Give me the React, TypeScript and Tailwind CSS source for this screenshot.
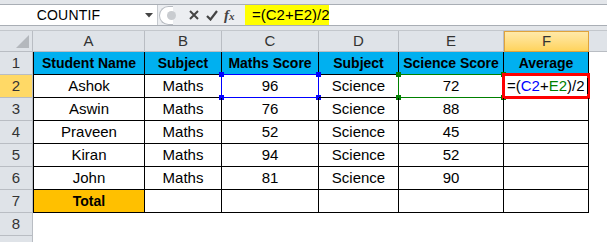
import React from "react";

const cols = ["A", "B", "C", "D", "E", "F"];
const widths = ["w-[112px]", "w-[77px]", "w-[97px]", "w-[80px]", "w-[105px]", "w-[85px]"];

const header = ["Student Name", "Subject", "Maths Score", "Subject", "Science Score", "Average"];

const rows = [
  ["Ashok", "Maths", "96", "Science", "72"],
  ["Aswin", "Maths", "76", "Science", "88"],
  ["Praveen", "Maths", "52", "Science", "45"],
  ["Kiran", "Maths", "94", "Science", "52"],
  ["John", "Maths", "81", "Science", "90"],
];

function Corners({ color }: { color: string }) {
  return (
    <>
      <div className={`absolute -left-[3px] -top-[3px] h-[5px] w-[5px] ${color}`} />
      <div className={`absolute -right-[3px] -top-[3px] h-[5px] w-[5px] ${color}`} />
      <div className={`absolute -left-[3px] -bottom-[3px] h-[5px] w-[5px] ${color}`} />
      <div className={`absolute -right-[3px] -bottom-[3px] h-[5px] w-[5px] ${color}`} />
    </>
  );
}

function RowHead({ n, active }: { n?: number; active?: boolean }) {
  return (
    <div
      className={`flex h-[23px] w-[33px] shrink-0 items-center justify-center border-b border-r border-[#b9bdc3] text-[15px] text-[#333] ${
        active ? "bg-[#ffd966]" : "bg-[#dfe3e8]"
      }`}
    >
      {n}
    </div>
  );
}

export default function App() {
  return (
    <div className="h-[242px] w-[607px] overflow-hidden whitespace-nowrap bg-white font-['Liberation_Sans',Arial,sans-serif] text-black">
      {/* formula bar */}
      <div className="bg-[#e3e6ea] pt-[4px] pb-[4px]">
        <div className="flex h-[22px] border-y border-[#a9aeb5] bg-white">
          <div className="relative flex w-[158px] items-center justify-center border-r border-[#c6cacf] text-[14px] tracking-[0.2px]">
            <span className="pr-[20px]">COUNTIF</span>
            <svg className="absolute right-[4px] top-[8px]" width="8" height="5" viewBox="0 0 8 5">
              <path d="M0 0 H8 L4 4.5 Z" fill="#444" />
            </svg>
          </div>
          <div className="flex w-[87px] items-center bg-[#eceef1]">
            <div className="ml-[1px] h-[19px] w-[14px] rounded-l-full border-y border-l border-[#b8bcc2] bg-white" />
            <div className="-ml-[6px] h-[9px] w-[9px] rounded-full bg-[#c9ccd0]" />
            <svg className="ml-[13px]" width="10" height="10" viewBox="0 0 10 10">
              <path d="M1 1 L9 9 M9 1 L1 9" stroke="#444" strokeWidth="2" />
            </svg>
            <svg className="ml-[7px]" width="12" height="11" viewBox="0 0 12 11">
              <path d="M1 6 L4.5 9.5 L11 1" stroke="#444" strokeWidth="2.2" fill="none" />
            </svg>
            <span className="ml-[6px] font-['Liberation_Serif',serif] text-[15px] italic font-bold text-[#444] leading-none">
              f<span className="text-[11px]">x</span>
            </span>
          </div>
          <div className="flex w-[84px] items-center bg-[#ffff00] pl-[7px] text-[15px]">=(C2+E2)/2</div>
          <div className="flex-1" />
        </div>
      </div>

      {/* column headers */}
      <div className="flex h-[22px] bg-[#dfe3e8] border-t border-[#c3c7cc]">
        <div className="relative w-[33px] shrink-0 border-r border-b border-[#b9bdc3]">
          <svg className="absolute bottom-[3px] right-[3px]" width="13" height="13" viewBox="0 0 13 13">
            <path d="M13 0 V13 H0 Z" fill="#b4b8bd" />
          </svg>
        </div>
        {cols.map((c, i) =>
          c === "F" ? (
            <div
              key={c}
              className={`${widths[i]} flex shrink-0 items-center justify-center border border-[#e0a33a] bg-gradient-to-b from-[#ffe9a8] to-[#ffd35a] text-[15px] text-[#333]`}
            >
              {c}
            </div>
          ) : (
            <div
              key={c}
              className={`${widths[i]} flex shrink-0 items-center justify-center border-r border-b border-[#b9bdc3] text-[15px] text-[#333]`}
            >
              {c}
            </div>
          )
        )}
        <div className="flex-1 border-b border-[#b9bdc3]" />
      </div>

      {/* row 1 */}
      <div className="flex">
        <RowHead n={1} />
        {header.map((h, i) => (
          <div
            key={i}
            className={`${widths[i]} flex h-[23px] shrink-0 items-center justify-center border-b border-r border-black bg-[#00b0f0] text-[14px] font-bold ${
              i === 0 ? "border-l" : ""
            }`}
          >
            {h}
          </div>
        ))}
      </div>

      {/* data rows */}
      {rows.map((r, ri) => (
        <div key={ri} className="flex">
          <RowHead n={ri + 2} active={ri === 0} />
          {r.map((v, ci) => (
            <div
              key={ci}
              className={`${widths[ci]} relative flex h-[23px] shrink-0 items-center justify-center border-b border-r border-black text-[15px] ${
                ci === 0 ? "border-l" : ""
              }`}
            >
              {v}
              {ri === 0 && ci === 2 && (
                <div className="absolute -left-px -top-px -right-px -bottom-px border border-[#0000ff]">
                  <Corners color="bg-[#0000ff]" />
                </div>
              )}
              {ri === 0 && ci === 4 && (
                <div className="absolute -left-px -top-px -right-px -bottom-px border border-[#008000]">
                  <Corners color="bg-[#008000]" />
                </div>
              )}
            </div>
          ))}
          <div className={`${widths[5]} relative flex h-[23px] shrink-0 items-center border-b border-r border-black text-[15px]`}>
            {ri === 0 && (
              <div className="absolute -left-[2px] -top-[2px] -right-[2px] -bottom-[2px] flex items-center border-[3px] border-[#ff0000] bg-white pl-[2px]">
                <span>=(</span>
                <span className="text-[#0000ff]">C2</span>
                <span>+</span>
                <span className="text-[#008000]">E2</span>
                <span>)/2</span>
                <span className="ml-[2px] h-[16px] w-px bg-black" />
              </div>
            )}
          </div>
        </div>
      ))}

      {/* total row */}
      <div className="flex">
        <RowHead n={7} />
        <div className={`${widths[0]} flex h-[23px] shrink-0 items-center justify-center border-b border-l border-r border-black bg-[#ffc000] text-[14px] font-bold`}>
          Total
        </div>
        {widths.slice(1).map((w, i) => (
          <div key={i} className={`${w} h-[23px] shrink-0 border-b border-r border-black`} />
        ))}
      </div>

      <div className="flex">
        <RowHead n={8} />
      </div>
      <div className="flex">
        <RowHead />
      </div>
    </div>
  );
}
